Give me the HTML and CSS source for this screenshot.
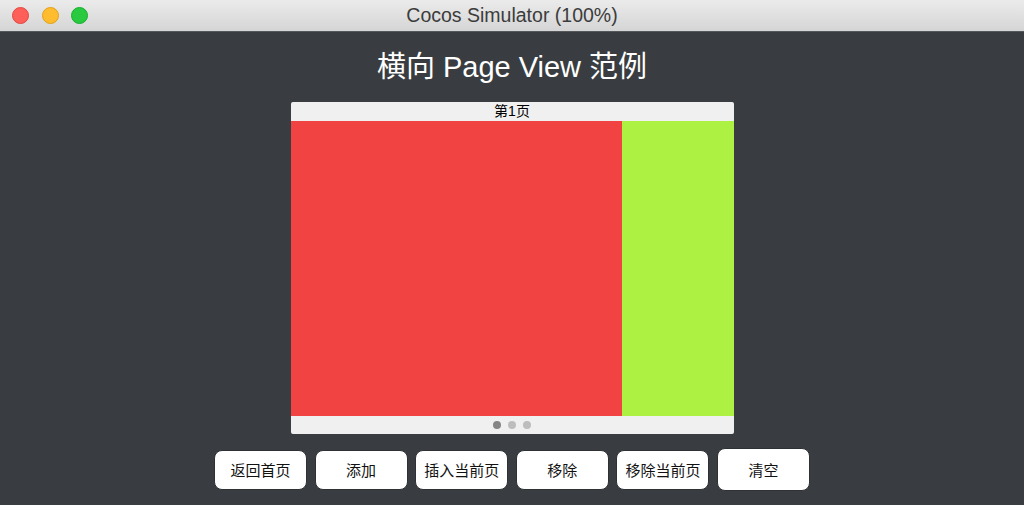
FILE: index.html
```html
<!DOCTYPE html>
<html lang="zh-CN">
<head>
<meta charset="utf-8">
<title>Cocos Simulator (100%)</title>
<link rel="stylesheet" href="styles.css">
</head>
<body>
<div class="window">
  <header class="titlebar">
    <div class="lights">
      <span class="light red"></span>
      <span class="light yellow"></span>
      <span class="light green"></span>
    </div>
    <div class="wintitle">Cocos Simulator (100%)</div>
  </header>
  <main class="stage">
    <h1 class="title">横向 Page View 范例</h1>
    <section class="pageview">
      <div class="pv-head">第1页</div>
      <div class="pv-body">
        <div class="page page-red"></div>
        <div class="page page-green"></div>
      </div>
      <div class="pv-foot">
        <span class="dot active"></span>
        <span class="dot"></span>
        <span class="dot"></span>
      </div>
    </section>
    <div class="buttons">
      <button class="btn">返回首页</button>
      <button class="btn">添加</button>
      <button class="btn">插入当前页</button>
      <button class="btn">移除</button>
      <button class="btn">移除当前页</button>
      <button class="btn btn-hover">清空</button>
    </div>
  </main>
</div>
</body>
</html>
```

FILE: styles.css
```css
html, body {
  margin: 0;
  padding: 0;
  width: 1024px;
  height: 505px;
  overflow: hidden;
  background: #393d41;
  font-family: "Noto Sans CJK SC", "Noto Sans", sans-serif;
}

.window {
  display: flex;
  flex-direction: column;
  width: 1024px;
  height: 505px;
}

.titlebar {
  position: relative;
  height: 31px;
  flex: none;
  background: linear-gradient(#ebebeb, #d5d5d5);
  border-bottom: 1px solid #55585b;
  display: flex;
  align-items: center;
  justify-content: center;
}

.lights {
  position: absolute;
  left: 12px;
  top: 7px;
  display: flex;
  gap: 12.5px;
}

.light {
  width: 17px;
  height: 17px;
  border-radius: 50%;
  box-sizing: border-box;
}
.red { background: #fe5f58; border: 1px solid #e2463f; }
.yellow { background: #febc2e; border: 1px solid #e1a116; }
.green { background: #29c940; border: 1px solid #14ae2b; }

.wintitle {
  font-family: "Liberation Sans", Arial, sans-serif;
  font-size: 19.5px;
  color: #3c3c3c;
}

.stage {
  flex: 1;
  display: flex;
  flex-direction: column;
  align-items: center;
}

.title {
  margin: 15px 0 0;
  height: 40px;
  line-height: 40px;
  font-family: "Liberation Sans", "Noto Sans CJK SC", sans-serif;
  font-size: 29px;
  font-weight: 400;
  color: #ffffff;
}

.pageview {
  margin-top: 15px;
  width: 443px;
  height: 332px;
  display: flex;
  flex-direction: column;
  background: #f0f0f0;
  border-radius: 2px;
  overflow: hidden;
}

.pv-head {
  height: 19px;
  line-height: 19px;
  text-align: center;
  font-family: "Liberation Sans", "Noto Sans CJK SC", sans-serif;
  font-size: 14px;
  color: #000;
}

.pv-body {
  height: 295px;
  display: flex;
}

.page-red {
  width: 331px;
  background: #f24343;
}

.page-green {
  flex: 1;
  background: #adf243;
}

.pv-foot {
  height: 18px;
  display: flex;
  justify-content: center;
  align-items: center;
  gap: 7px;
}

.dot {
  width: 8px;
  height: 8px;
  border-radius: 50%;
  background: #bdbdbd;
}
.dot.active { background: #858585; }

.buttons {
  margin-top: 14px;
  display: flex;
  align-items: center;
  gap: 7.6px;
}

.btn {
  width: 93px;
  height: 40px;
  border: 1px solid #2e3134;
  border-radius: 8px;
  background: #ffffff;
  color: #111;
  font-family: "Noto Sans CJK SC", "Noto Sans", sans-serif;
  font-size: 15px;
  padding: 0;
}

.btn-hover {
  height: 43px;
}
```
